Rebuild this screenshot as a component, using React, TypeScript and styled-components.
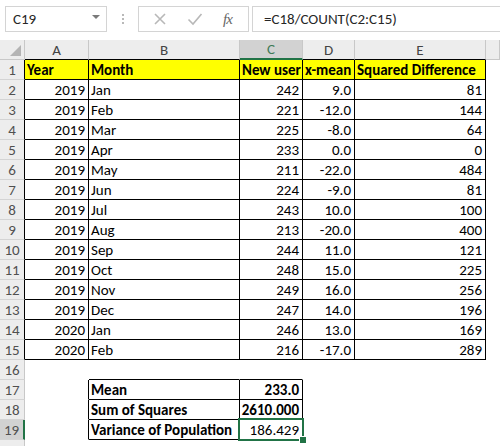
import React from "react";
import styled, { createGlobalStyle, css } from "styled-components";

const GlobalStyle = createGlobalStyle`
  html, body {
    margin: 0;
    padding: 0;
    background: #ffffff;
  }
  body {
    font-family: Carlito, Lato, "Liberation Sans", sans-serif;
  }
`;

const FONT = `Carlito, Lato, "Liberation Sans", sans-serif`;

const Sheet = styled.div`
  width: 500px;
  height: 446px;
  overflow: hidden;
  background: #ffffff;
`;

const FormulaBar = styled.div`
  height: 40px;
  display: flex;
  align-items: flex-start;
  padding: 6px 0 0 5px;
  box-sizing: border-box;
  background: #ffffff;
`;

const NameBox = styled.div`
  width: 102px;
  height: 26px;
  box-sizing: border-box;
  border: 1px solid #d4d4d4;
  background: #fff;
  display: flex;
  align-items: center;
  justify-content: space-between;
  padding: 0 6px 0 7px;
  font-family: ${FONT};
  font-size: 15px;
  color: #262626;
`;

const DropArrow = styled.span`
  width: 0;
  height: 0;
  border-left: 4px solid transparent;
  border-right: 4px solid transparent;
  border-top: 4px solid #7a7a7a;
  margin-top: -4px;
`;

const Grip = styled.div`
  width: 31px;
  height: 26px;
  display: flex;
  flex-direction: column;
  align-items: center;
  justify-content: center;
  gap: 2px;
`;

const GripDot = styled.span`
  width: 2px;
  height: 2px;
  background: #b9b9b9;
`;

const FxBox = styled.div`
  width: 111px;
  height: 26px;
  box-sizing: border-box;
  border: 1px solid #d4d4d4;
  background: #fff;
  display: flex;
  align-items: center;
  justify-content: space-around;
  padding: 0 6px 0 4px;
`;

const FxIcon = styled.span`
  font-family: "Liberation Serif", serif;
  font-style: italic;
  font-size: 15px;
  color: #666;
  letter-spacing: -1px;
`;

const FormulaInput = styled.div`
  flex: 1;
  height: 26px;
  margin-left: 3px;
  box-sizing: border-box;
  border: 1px solid #d4d4d4;
  border-right: none;
  background: #fff;
  display: flex;
  align-items: center;
  padding-left: 11px;
  font-family: ${FONT};
  font-size: 15px;
  color: #262626;
`;

const Grid = styled.div`
  display: grid;
  grid-template-columns: 25px 64px 151px 63px 52px 131px 1fr;
  grid-auto-rows: 20px;
`;

const HeadCell = styled.div<{ $selected?: boolean; $bottom?: string }>`
  box-sizing: border-box;
  background: ${({ $selected }) => ($selected ? "#d2d2d2" : "#ededed")};
  border-right: 1px solid #c8c8c8;
  border-bottom: ${({ $selected, $bottom }) =>
    $selected ? "2px solid #217346" : `1px solid ${$bottom || "#c8c8c8"}`};
  display: flex;
  align-items: center;
  justify-content: center;
  font-family: ${FONT};
  font-size: 15px;
  color: ${({ $selected }) => ($selected ? "#3f7a57" : "#444")};
  overflow: hidden;
`;

const Corner = styled(HeadCell)`
  position: relative;
  &::after {
    content: "";
    position: absolute;
    right: 3px;
    bottom: 3px;
    width: 0;
    height: 0;
    border-left: 11px solid transparent;
    border-bottom: 11px solid #b4b4b4;
  }
`;

const RowHead = styled.div<{ $selected?: boolean; $right?: string }>`
  box-sizing: border-box;
  background: ${({ $selected }) => ($selected ? "#d2d2d2" : "#ededed")};
  border-bottom: 1px solid #d4d4d4;
  border-right: ${({ $selected, $right }) =>
    $selected ? "2px solid #217346" : `1px solid ${$right || "#c8c8c8"}`};
  display: flex;
  align-items: center;
  justify-content: center;
  font-family: ${FONT};
  font-size: 15px;
  color: #505050;
`;

const Cell = styled.div<{
  $right: string;
  $bottom: string;
  $fill?: string;
  $align?: "left" | "right";
  $bold?: boolean;
  $active?: boolean;
}>`
  position: relative;
  box-sizing: border-box;
  background: ${({ $fill }) => $fill || "#fff"};
  border-right: 1px solid ${({ $right }) => $right};
  border-bottom: 1px solid ${({ $bottom }) => $bottom};
  display: flex;
  align-items: center;
  justify-content: ${({ $align }) => ($align === "right" ? "flex-end" : "flex-start")};
  padding: 0 3px 0 2px;
  font-family: ${FONT};
  font-size: 15px;
  font-weight: ${({ $bold }) => ($bold ? 700 : 400)};
  color: #000;
  white-space: nowrap;
  overflow: ${({ $active }) => ($active ? "visible" : "hidden")};
  ${({ $active }) =>
    $active &&
    css`
      &::before {
        content: "";
        position: absolute;
        left: -2px;
        top: -2px;
        right: -2px;
        bottom: -2px;
        border: 2px solid #217346;
        pointer-events: none;
        z-index: 2;
      }
      &::after {
        content: "";
        position: absolute;
        right: -5px;
        bottom: -5px;
        width: 6px;
        height: 6px;
        background: #217346;
        border: 1px solid #fff;
        z-index: 3;
      }
    `}
`;

type Val = { text: string; align?: "left" | "right"; bold?: boolean };

const data: [number, string, number, string, number][] = [
  [2019, "Jan", 242, "9.0", 81],
  [2019, "Feb", 221, "-12.0", 144],
  [2019, "Mar", 225, "-8.0", 64],
  [2019, "Apr", 233, "0.0", 0],
  [2019, "May", 211, "-22.0", 484],
  [2019, "Jun", 224, "-9.0", 81],
  [2019, "Jul", 243, "10.0", 100],
  [2019, "Aug", 213, "-20.0", 400],
  [2019, "Sep", 244, "11.0", 121],
  [2019, "Oct", 248, "15.0", 225],
  [2019, "Nov", 249, "16.0", 256],
  [2019, "Dec", 247, "14.0", 196],
  [2020, "Jan", 246, "13.0", 169],
  [2020, "Feb", 216, "-17.0", 289],
];

const COLS = ["A", "B", "C", "D", "E", ""];
const ROWS = 20;

const buildValues = () => {
  const v: Record<string, Val> = {};
  const headers = ["Year", "Month", "New user", "x-mean", "Squared Difference"];
  headers.forEach((h, i) => (v[`1-${i}`] = { text: h, bold: true }));
  data.forEach((row, r) => {
    const n = r + 2;
    v[`${n}-0`] = { text: String(row[0]), align: "right" };
    v[`${n}-1`] = { text: row[1] };
    v[`${n}-2`] = { text: String(row[2]), align: "right" };
    v[`${n}-3`] = { text: row[3], align: "right" };
    v[`${n}-4`] = { text: String(row[4]), align: "right" };
  });
  v["17-1"] = { text: "Mean", bold: true };
  v["17-2"] = { text: "233.0", bold: true, align: "right" };
  v["18-1"] = { text: "Sum of Squares", bold: true };
  v["18-2"] = { text: "2610.000", bold: true, align: "right" };
  v["19-1"] = { text: "Variance of Population", bold: true };
  v["19-2"] = { text: "186.429", align: "right" };
  return v;
};

const values = buildValues();

const inTable = (r: number, c: number) =>
  (r >= 1 && r <= 15 && c >= 0 && c <= 4) || (r >= 17 && r <= 19 && (c === 1 || c === 2));

// gridlines are switched off in this sheet, only the drawn borders show
const GRID_LINE = "#ffffff";

export default function App() {
  const rows = Array.from({ length: ROWS }, (_, i) => i + 1);
  return (
    <Sheet>
      <GlobalStyle />
      <FormulaBar>
        <NameBox>
          C19
          <DropArrow />
        </NameBox>
        <Grip>
          <GripDot />
          <GripDot />
          <GripDot />
        </Grip>
        <FxBox>
          <svg width="14" height="14" viewBox="0 0 14 14">
            <path d="M2 2 L12 12 M12 2 L2 12" stroke="#b8b8b8" strokeWidth="1.6" fill="none" />
          </svg>
          <svg width="16" height="14" viewBox="0 0 16 14">
            <path d="M1.5 7.5 L6 12 L14.5 2" stroke="#b8b8b8" strokeWidth="1.6" fill="none" />
          </svg>
          <FxIcon>fx</FxIcon>
        </FxBox>
        <FormulaInput>=C18/COUNT(C2:C15)</FormulaInput>
      </FormulaBar>
      <Grid>
        <Corner />
        {COLS.map((c, i) => (
          <HeadCell key={c + i} $selected={c === "C"} $bottom={inTable(1, i) ? "#000" : undefined}>
            {c}
          </HeadCell>
        ))}
        {rows.map((r) => (
          <React.Fragment key={r}>
            <RowHead $selected={r === 19} $right={inTable(r, 0) ? "#000" : undefined}>
              {r < ROWS ? r : null}
            </RowHead>
            {COLS.map((_, c) => {
              const v = values[`${r}-${c}`];
              const right = inTable(r, c) || inTable(r, c + 1) ? "#000" : GRID_LINE;
              const bottom = inTable(r, c) || inTable(r + 1, c) ? "#000" : GRID_LINE;
              return (
                <Cell
                  key={c}
                  $right={right}
                  $bottom={bottom}
                  $fill={r === 1 && c <= 4 ? "#ffff00" : undefined}
                  $align={v?.align}
                  $bold={v?.bold}
                  $active={r === 19 && c === 2}
                >
                  {v?.text}
                </Cell>
              );
            })}
          </React.Fragment>
        ))}
      </Grid>
    </Sheet>
  );
}
